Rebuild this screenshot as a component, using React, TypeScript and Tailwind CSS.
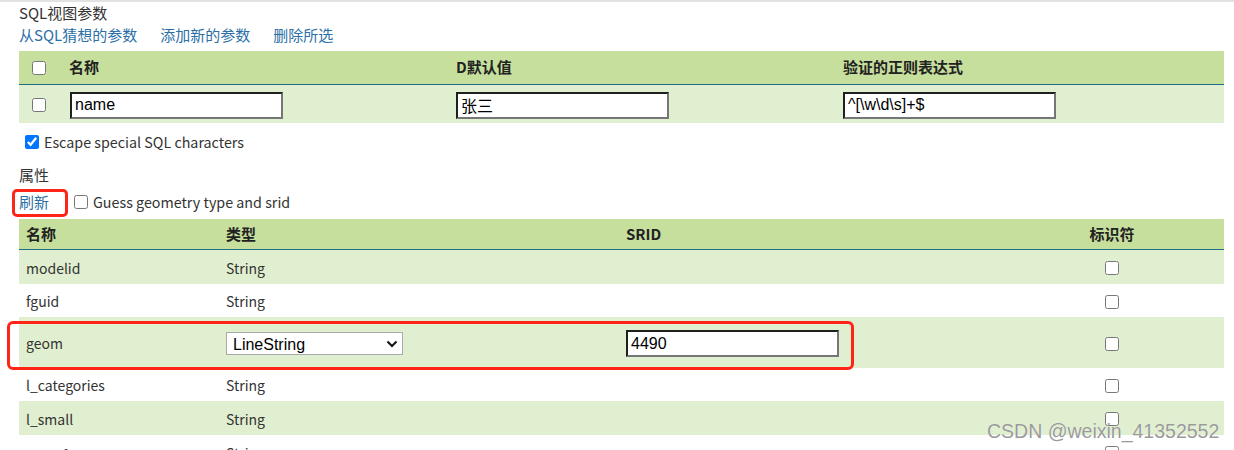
import React from 'react';

const cjk = "font-['Noto_Sans_CJK_SC','Noto_Sans',sans-serif]";
const inputFont = "font-['Liberation_Sans','Noto_Sans_CJK_SC',Arial,sans-serif]";

interface Attr {
  name: string;
  type: string;
  rowH: string;
  green: boolean;
  geom?: boolean;
}

const attrs: Attr[] = [
  { name: 'modelid', type: 'String', rowH: 'h-[34px]', green: true },
  { name: 'fguid', type: 'String', rowH: 'h-[33px]', green: false },
  { name: 'geom', type: 'LineString', rowH: 'h-[51px]', green: true, geom: true },
  { name: 'l_categories', type: 'String', rowH: 'h-[33px]', green: false },
  { name: 'l_small', type: 'String', rowH: 'h-[34px]', green: true },
  { name: 'area_1', type: 'String', rowH: 'h-[34px]', green: false },
];

function TextBox({ value, width }: { value: string; width: string }) {
  return (
    <input
      type="text"
      defaultValue={value}
      className={`${width} h-[27px] bg-white border-2 border-t-[#1f1f1f] border-l-[#1f1f1f] border-b-[#767676] border-r-[#767676] px-[3px] text-[16px] text-black outline-none ${inputFont}`}
    />
  );
}

function Check({ checked }: { checked?: boolean }) {
  return (
    <input
      type="checkbox"
      defaultChecked={checked}
      className="w-[14px] h-[14px] m-0 accent-[#0075ff]"
    />
  );
}

export default function App() {
  return (
    <div className={`relative w-[1234px] h-[450px] overflow-hidden bg-white text-[#333] ${cjk}`}>
      <div className="h-[2px] bg-[#e2e2e2]" />

      <div className="pl-[19px] pr-[10px]">
        <div className="h-[22px] flex items-center text-[15px] text-[#333]">SQL视图参数</div>
        <div className="h-[22px] flex items-center gap-[23px] text-[15px] text-[#2c6fa6]">
          <span>从SQL猜想的参数</span>
          <span>添加新的参数</span>
          <span>删除所选</span>
        </div>

        {/* parameters table */}
        <div className="mt-[5px] w-[1205px]">
          <div className="h-[34px] flex items-center bg-[#c6df9c] border-b border-[#1d6d85] text-[15px] font-bold text-[#222]">
            <div className="w-[43px] pl-[13px] flex items-center"><Check /></div>
            <div className="w-[387px] pl-[7px]">名称</div>
            <div className="w-[387px] pl-[7px]">D默认值</div>
            <div className="flex-1 pl-[7px]">验证的正则表达式</div>
          </div>
          <div className="h-[38px] pt-[2px] flex items-center bg-[#e0efcf]">
            <div className="w-[43px] pl-[13px] flex items-center"><Check /></div>
            <div className="w-[387px] pl-[8px]"><TextBox value="name" width="w-[213px]" /></div>
            <div className="w-[387px] pl-[7px]"><TextBox value="张三" width="w-[213px]" /></div>
            <div className="flex-1 pl-[7px]"><TextBox value="^[\w\d\s]+$" width="w-[213px]" /></div>
          </div>
        </div>

        <label className="mt-[9px] h-[20px] flex items-center gap-[5px] pl-[6px] text-[14.3px] text-[#333]">
          <Check checked />
          <span>Escape special SQL characters</span>
        </label>

        <div className="mt-[13px] h-[20px] flex items-center text-[15px] text-[#333]">属性</div>

        <div className="mt-[7px] h-[20px] flex items-center text-[15px]">
          <span className="text-[#2c6fa6] mr-[25px]">刷新</span>
          <label className="flex items-center gap-[5px] text-[14.3px] text-[#333]">
            <Check />
            <span>Guess geometry type and srid</span>
          </label>
        </div>

        {/* attributes table */}
        <div className="mt-[7px] w-[1205px] text-[14px]">
          <div className="h-[31px] pt-[1px] flex items-center bg-[#c6df9c] border-b border-[#1d6d85] text-[15px] font-bold text-[#222]">
            <div className="w-[200px] pl-[7px]">名称</div>
            <div className="w-[400px] pl-[7px]">类型</div>
            <div className="w-[381px] pl-[7px]">SRID</div>
            <div className="flex-1 text-center">标识符</div>
          </div>
          {attrs.map((a) => (
            <div
              key={a.name}
              className={`${a.rowH} pt-[2px] flex items-center ${a.green ? 'bg-[#e0efcf]' : 'bg-white'}`}
            >
              <div className="w-[200px] pl-[7px]">{a.name}</div>
              <div className="w-[400px] pl-[7px]">
                {a.geom ? (
                  <div className="relative w-[177px] h-[23px]">
                    <select
                      defaultValue="LineString"
                      className={`appearance-none w-full h-full bg-white border border-[#aaaaaa] pl-[6px] text-[16px] text-black outline-none ${inputFont}`}
                    >
                      <option>Point</option>
                      <option>LineString</option>
                      <option>Polygon</option>
                    </select>
                    <svg
                      className="absolute right-[5px] top-[8px] pointer-events-none"
                      width="12"
                      height="8"
                      viewBox="0 0 12 8"
                    >
                      <path d="M1.5 1.5 L6 6 L10.5 1.5" fill="none" stroke="#111" strokeWidth="2" />
                    </svg>
                  </div>
                ) : (
                  a.type
                )}
              </div>
              <div className="w-[381px] pl-[7px]">
                {a.geom && <TextBox value="4490" width="w-[213px]" />}
              </div>
              <div className="flex-1 flex justify-center"><Check /></div>
            </div>
          ))}
        </div>
      </div>

      {/* red annotation boxes */}
      <div className="absolute left-[12px] top-[189px] w-[56px] h-[28px] border-[3px] border-[#ff2418] rounded-[5px]" />
      <div className="absolute left-[7px] top-[321px] w-[847px] h-[49px] border-[3px] border-[#ff2418] rounded-[6px]" />

      {/* watermark */}
      <div className="absolute left-[987px] top-[418px] text-[19.5px] leading-[26px] text-[#9a9a9a] font-['Liberation_Sans',Arial,sans-serif] [text-shadow:0_0_1px_#fff]">
        CSDN @weixin_41352552
      </div>
    </div>
  );
}
